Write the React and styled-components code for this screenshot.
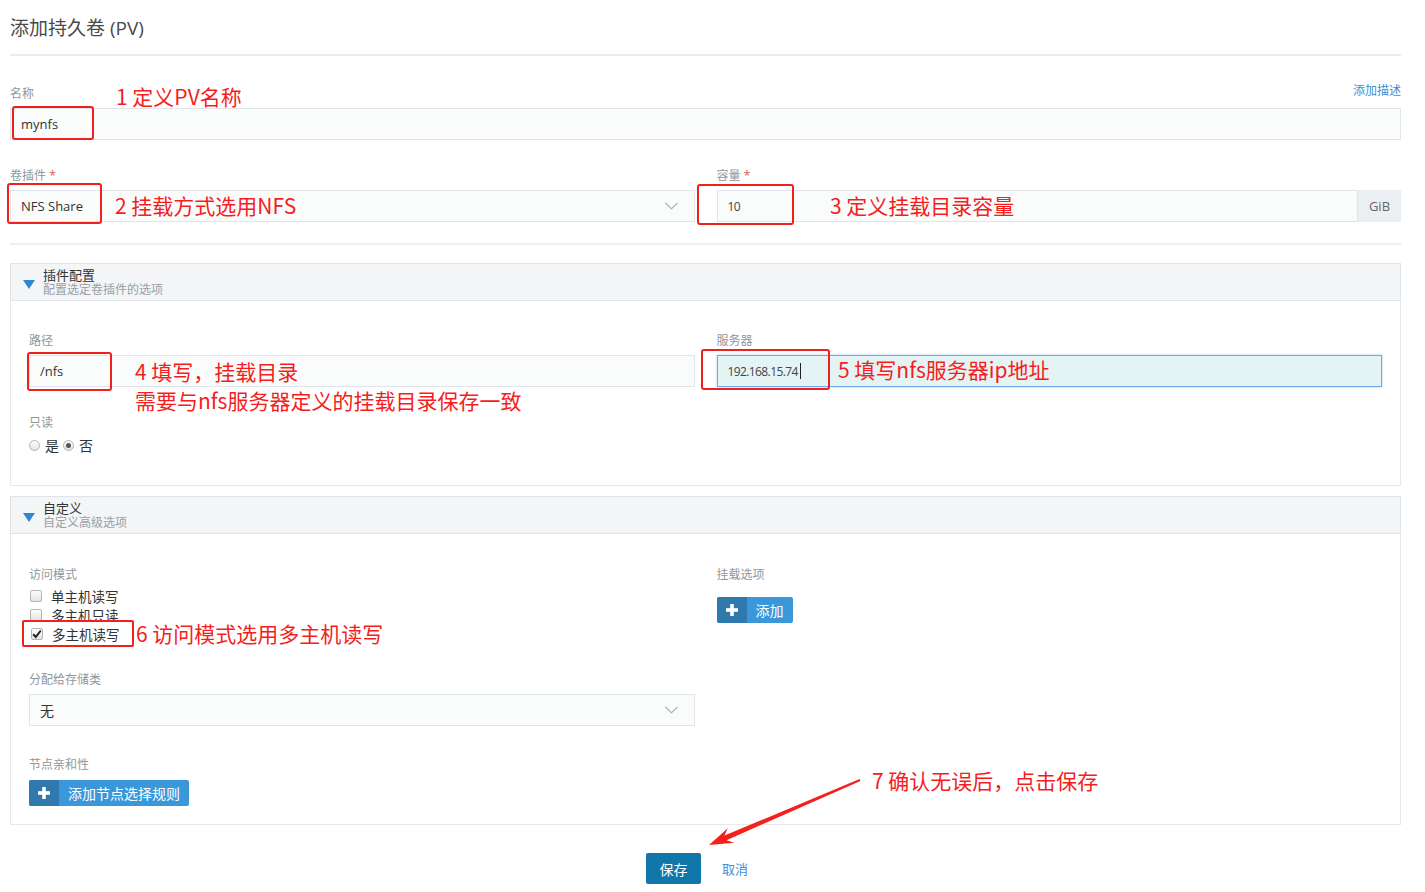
import React from "react";
import styled, { createGlobalStyle, css } from "styled-components";

const GlobalStyle = createGlobalStyle`
  html, body {
    margin: 0;
    padding: 0;
    background: #fff;
  }
  body {
    font-family: "Open Sans", "Noto Sans CJK SC", sans-serif;
    color: #333;
  }
  * {
    box-sizing: border-box;
  }
`;

const Page = styled.div`
  position: relative;
  width: 1425px;
  min-height: 892px;
  padding: 0 24px 0 10px;
`;

const Header = styled.header`
  height: 56px;
  padding-top: 2px;
  display: flex;
  align-items: center;
  border-bottom: 2px solid #e9edef;
`;

const Title = styled.h1`
  margin: 0;
  font-size: 19px;
  font-weight: 400;
  color: #4a4a4a;
  line-height: 24px;
`;

const Field = styled.div`
  margin-top: ${({ $gap }) => $gap}px;
`;

const LabelRow = styled.div`
  display: flex;
  align-items: flex-end;
  justify-content: space-between;
  height: 16px;
  margin-bottom: 6px;
`;

const Label = styled.span`
  font-size: 12px;
  line-height: 16px;
  color: #8f979c;

  ${({ $required }) =>
    $required &&
    css`
      &::after {
        content: " *";
        color: #e0584f;
      }
    `}
`;

const AddLink = styled.a`
  font-size: 12px;
  line-height: 16px;
  color: #3b8fd1;
  margin-bottom: 3px;
  cursor: pointer;
`;

const Box = styled.div`
  height: 32px;
  flex: ${({ $grow }) => ($grow ? "1 1 auto" : "none")};
  display: flex;
  align-items: center;
  justify-content: space-between;
  padding: 0 16px 0 10px;
  border: 1px solid #dfe5e8;
  background: #fafbfb;
  font-size: 13px;
  color: #333;

  ${({ $focus }) =>
    $focus &&
    css`
      border-color: #6fa9e8;
      background: #e4f3f3;
      box-shadow: 0 0 2px #9cc7f2;
    `}
`;

const Digits = styled.span`
  font-size: 12px;
  letter-spacing: -0.6px;
  color: #444;
  display: flex;
  align-items: center;
`;

const Caret = styled.i`
  display: inline-block;
  width: 1px;
  height: 16px;
  margin-left: 2px;
  background: #222;
`;

const Chevron = () => (
  <svg width="13" height="8" viewBox="0 0 13 8">
    <polyline points="0.5,0.8 6.5,6.8 12.5,0.8" fill="none" stroke="#a3a9ad" strokeWidth="1.1" />
  </svg>
);

const Group = styled.div`
  display: flex;
`;

const Addon = styled.div`
  width: 43px;
  height: 32px;
  display: flex;
  align-items: center;
  justify-content: center;
  background: #eceff1;
  font-size: 13px;
  color: #666;
`;

const Cols = styled.div`
  display: grid;
  grid-template-columns: 1fr 1fr;
  column-gap: 22px;
  align-items: start;
`;

const Divider = styled.hr`
  margin: 21px 0 0;
  border: 0;
  height: 2px;
  background: #eceff1;
`;

const Panel = styled.section`
  margin-top: ${({ $gap }) => $gap}px;
`;

const PanelHead = styled.div`
  height: 38px;
  display: flex;
  align-items: center;
  gap: 8px;
  padding: 0 12px;
  border: 1px solid #dee4e7;
  background: #f3f5f6;
`;

const Triangle = styled.span`
  width: 0;
  height: 0;
  margin-top: 4px;
  border-left: 6px solid transparent;
  border-right: 6px solid transparent;
  border-top: 9px solid #2f87cf;
`;

const HeadText = styled.div`
  display: flex;
  flex-direction: column;
  gap: 1px;
`;

const PanelTitle = styled.span`
  font-size: 13px;
  line-height: 14px;
  color: #333;
`;

const PanelSub = styled.span`
  font-size: 12px;
  line-height: 13px;
  color: #9aa0a5;
`;

const PanelBody = styled.div`
  padding: ${({ $pad }) => $pad};
  border: 1px solid #e6eaec;
  border-top: 0;
`;

const Stack = styled.div`
  display: flex;
  flex-direction: column;
`;

const RadioRow = styled.div`
  display: flex;
  align-items: center;
  height: 16px;
  margin-top: 6px;
  font-size: 14px;
  color: #333;
`;

const Radio = styled.span`
  width: 11px;
  height: 11px;
  margin: 0 5px 0 0;
  border-radius: 50%;
  border: 1px solid #b3b3b3;
  background: linear-gradient(#fdfdfd, #e3e3e3);
  display: inline-flex;
  align-items: center;
  justify-content: center;

  & + span {
    margin-right: 4px;
  }

  ${({ $on }) =>
    $on &&
    css`
      &::after {
        content: "";
        width: 5px;
        height: 5px;
        border-radius: 50%;
        background: #555;
      }
    `}
`;

const CheckList = styled.div`
  display: flex;
  flex-direction: column;
  margin-top: -3px;
  align-items: flex-start;
`;

const CheckRow = styled.div`
  display: flex;
  align-items: center;
  height: 19px;
  gap: 9px;
  font-size: 13.5px;
  color: #333;
  padding-left: 1px;
`;

const MarkRow = styled.div`
  position: relative;
  margin: -4px 0 0 -7px;
  padding: 2px 12px 2px 6px;
  border: 2px solid #f0201c;
  border-radius: 2px;
  background: #fff;
`;

const Check = styled.span`
  width: 12px;
  height: 12px;
  border: 1px solid #b5b5b5;
  border-radius: 2px;
  background: linear-gradient(#fcfcfc, #e4e4e4);
  display: inline-flex;
  align-items: center;
  justify-content: center;
`;

const Tick = () => (
  <svg width="10" height="10" viewBox="0 0 10 10">
    <path d="M1.2 5.2 L3.8 8 L8.8 1.5" fill="none" stroke="#222" strokeWidth="2" />
  </svg>
);

const SplitButton = styled.button`
  display: inline-flex;
  align-items: stretch;
  height: 26px;
  margin-top: ${({ $gap }) => $gap}px;
  padding: 0;
  border: 0;
  border-radius: 2px;
  overflow: hidden;
  background: #3a98da;
  color: #fff;
  font-family: inherit;
  font-size: 14px;
  cursor: pointer;
  align-self: flex-start;
`;

const ButtonIcon = styled.span`
  width: 30px;
  display: flex;
  align-items: center;
  justify-content: center;
  background: #2f79ad;
`;

const ButtonText = styled.span`
  display: flex;
  align-items: center;
  padding: 0 ${({ $pad }) => $pad}px;
`;

const Plus = () => (
  <svg width="12" height="12" viewBox="0 0 12 12">
    <rect x="4.2" y="0" width="3.6" height="12" fill="#fff" />
    <rect x="0" y="4.2" width="12" height="3.6" fill="#fff" />
  </svg>
);

const Footer = styled.div`
  display: flex;
  justify-content: center;
  align-items: center;
  margin-top: 28px;
`;

const SaveButton = styled.button`
  width: 55px;
  height: 31px;
  border: 0;
  border-radius: 2px;
  background: #1176a9;
  color: #fff;
  font-family: inherit;
  font-size: 14px;
  cursor: pointer;
`;

const CancelLink = styled.a`
  padding: 0 17px 0 21px;
  font-size: 13px;
  color: #3d8ed5;
  cursor: pointer;
`;

/* annotation layer drawn over the form */
const Mark = styled.div`
  position: absolute;
  left: ${({ $x }) => $x}px;
  top: ${({ $y }) => $y}px;
  width: ${({ $w }) => $w}px;
  height: ${({ $h }) => $h}px;
  border: 2.5px solid #f0201c;
  border-radius: 3px;
  pointer-events: none;
`;

const Note = styled.div`
  position: absolute;
  left: ${({ $x }) => $x}px;
  top: ${({ $y }) => $y}px;
  font-family: "Noto Sans CJK SC", sans-serif;
  font-size: 21px;
  line-height: ${({ $lh }) => $lh || 24}px;
  color: #f51d1d;
  white-space: nowrap;
  pointer-events: none;
`;

const ArrowLayer = styled.svg`
  position: absolute;
  left: 0;
  top: 0;
  pointer-events: none;
`;

const accessModes = [
  { key: "rwo", label: "单主机读写" },
  { key: "rox", label: "多主机只读" },
];

export default function App() {
  return (
    <>
      <GlobalStyle />
      <Page>
        <Header>
          <Title>添加持久卷 (PV)</Title>
        </Header>

        <Field $gap={30}>
          <LabelRow>
            <Label>名称</Label>
            <AddLink>添加描述</AddLink>
          </LabelRow>
          <Box>mynfs</Box>
        </Field>

        <Cols>
          <Field $gap={28}>
            <LabelRow>
              <Label $required>卷插件</Label>
            </LabelRow>
            <Box>
              NFS Share
              <Chevron />
            </Box>
          </Field>
          <Field $gap={28}>
            <LabelRow>
              <Label $required>容量</Label>
            </LabelRow>
            <Group>
              <Box $grow>
                <Digits>10</Digits>
              </Box>
              <Addon>GiB</Addon>
            </Group>
          </Field>
        </Cols>

        <Divider />

        <Panel $gap={18}>
          <PanelHead>
            <Triangle />
            <HeadText>
              <PanelTitle>插件配置</PanelTitle>
              <PanelSub>配置选定卷插件的选项</PanelSub>
            </HeadText>
          </PanelHead>
          <PanelBody $pad="32px 18px 32px 18px">
            <Cols>
              <Stack>
                <LabelRow>
                  <Label>路径</Label>
                </LabelRow>
                <Box>/nfs</Box>
                <Field $gap={28}>
                  <LabelRow>
                    <Label>只读</Label>
                  </LabelRow>
                  <RadioRow>
                    <Radio />
                    <span>是</span>
                    <Radio $on />
                    <span>否</span>
                  </RadioRow>
                </Field>
              </Stack>
              <Stack>
                <LabelRow>
                  <Label>服务器</Label>
                </LabelRow>
                <Box $focus>
                  <Digits>
                    192.168.15.74
                    <Caret />
                  </Digits>
                </Box>
              </Stack>
            </Cols>
          </PanelBody>
        </Panel>

        <Panel $gap={10}>
          <PanelHead>
            <Triangle />
            <HeadText>
              <PanelTitle>自定义</PanelTitle>
              <PanelSub>自定义高级选项</PanelSub>
            </HeadText>
          </PanelHead>
          <PanelBody $pad="33px 18px 18px 18px">
            <Cols>
              <Stack>
                <LabelRow>
                  <Label>访问模式</Label>
                </LabelRow>
                <CheckList>
                  {accessModes.map((mode) => (
                    <CheckRow key={mode.key}>
                      <Check />
                      <span>{mode.label}</span>
                    </CheckRow>
                  ))}
                  <MarkRow>
                    <CheckRow>
                      <Check>
                        <Tick />
                      </Check>
                      <span>多主机读写</span>
                    </CheckRow>
                  </MarkRow>
                </CheckList>

                <Field $gap={25}>
                  <LabelRow>
                    <Label>分配给存储类</Label>
                  </LabelRow>
                  <Box>
                    <span style={{ fontSize: 14 }}>无</span>
                    <Chevron />
                  </Box>
                </Field>

                <Field $gap={31}>
                  <LabelRow>
                    <Label>节点亲和性</Label>
                  </LabelRow>
                  <SplitButton $gap={1}>
                    <ButtonIcon>
                      <Plus />
                    </ButtonIcon>
                    <ButtonText $pad={9}>添加节点选择规则</ButtonText>
                  </SplitButton>
                </Field>
              </Stack>
              <Stack>
                <LabelRow>
                  <Label>挂载选项</Label>
                </LabelRow>
                <SplitButton $gap={8}>
                  <ButtonIcon>
                    <Plus />
                  </ButtonIcon>
                  <ButtonText $pad={9}>添加</ButtonText>
                </SplitButton>
              </Stack>
            </Cols>
          </PanelBody>
        </Panel>

        <Footer>
          <SaveButton>保存</SaveButton>
          <CancelLink>取消</CancelLink>
        </Footer>

        <Mark $x={12} $y={106} $w={82} $h={34} />
        <Mark $x={7} $y={183} $w={95} $h={41} />
        <Mark $x={697} $y={184} $w={97} $h={41} />
        <Mark $x={27} $y={352} $w={85} $h={39} />
        <Mark $x={701} $y={349} $w={129} $h={41} />

        <Note $x={116} $y={84}>1 定义PV名称</Note>
        <Note $x={115} $y={193}>2 挂载方式选用NFS</Note>
        <Note $x={830} $y={193}>3 定义挂载目录容量</Note>
        <Note $x={135} $y={357} $lh={29}>
          4 填写，挂载目录
          <br />
          需要与nfs服务器定义的挂载目录保存一致
        </Note>
        <Note $x={838} $y={357}>5 填写nfs服务器ip地址</Note>
        <Note $x={136} $y={621}>6 访问模式选用多主机读写</Note>
        <Note $x={872} $y={768}>7 确认无误后，点击保存</Note>

        <ArrowLayer width="1425" height="892" viewBox="0 0 1425 892">
          <polygon
            points="859.6,779.1 724.5,835.6 727.8,828.2 709,845 734.2,842.8 726.5,840.2 860.4,780.9"
            fill="#f3201b"
          />
        </ArrowLayer>
      </Page>
    </>
  );
}
